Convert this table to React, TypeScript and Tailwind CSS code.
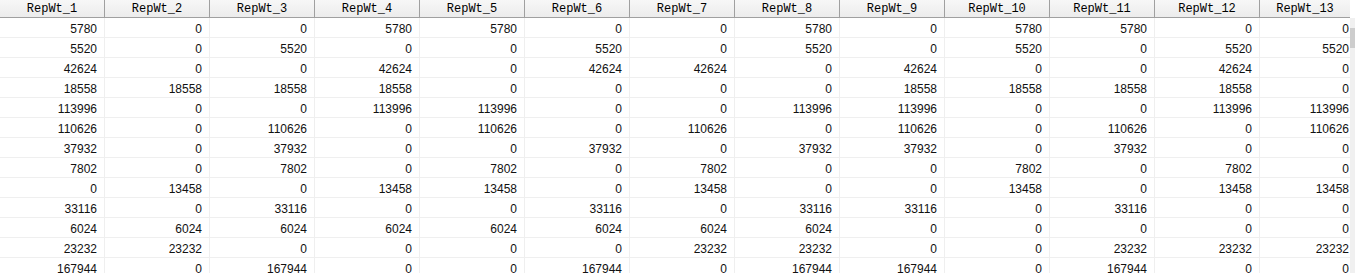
import React from 'react';

const headers = Array.from({ length: 13 }, (_, i) => `RepWt_${i + 1}`);

const rows: number[][] = [
  [5780, 0, 0, 5780, 5780, 0, 0, 5780, 0, 5780, 5780, 0, 0],
  [5520, 0, 5520, 0, 0, 5520, 0, 5520, 0, 5520, 0, 5520, 5520],
  [42624, 0, 0, 42624, 0, 42624, 42624, 0, 42624, 0, 0, 42624, 0],
  [18558, 18558, 18558, 18558, 0, 0, 0, 0, 18558, 18558, 18558, 18558, 0],
  [113996, 0, 0, 113996, 113996, 0, 0, 113996, 113996, 0, 0, 113996, 113996],
  [110626, 0, 110626, 0, 110626, 0, 110626, 0, 110626, 0, 110626, 0, 110626],
  [37932, 0, 37932, 0, 0, 37932, 0, 37932, 37932, 0, 37932, 0, 0],
  [7802, 0, 7802, 0, 7802, 0, 7802, 0, 0, 7802, 0, 7802, 0],
  [0, 13458, 0, 13458, 13458, 0, 13458, 0, 0, 13458, 0, 13458, 13458],
  [33116, 0, 33116, 0, 0, 33116, 0, 33116, 33116, 0, 33116, 0, 0],
  [6024, 6024, 6024, 6024, 6024, 6024, 6024, 6024, 0, 0, 0, 0, 0],
  [23232, 23232, 0, 0, 0, 0, 23232, 23232, 0, 0, 23232, 23232, 23232],
  [167944, 0, 167944, 0, 0, 167944, 0, 167944, 167944, 0, 167944, 0, 0],
];

export default function App() {
  return (
    <div className="flex h-[273px] w-[1355px] overflow-hidden bg-white">
      <div className="w-[1350px] overflow-hidden">
        <div className="grid grid-cols-[repeat(12,105px)_90px]">
          {headers.map((h, i) => (
            <div
              key={h}
              className={`flex h-[18px] items-center justify-center border-b border-[#a0a0a0] bg-gradient-to-b from-[#f7f7f7] to-[#ececec] font-['Liberation_Mono',monospace] text-[12px] text-black ${
                i < 12 ? 'border-r' : ''
              }`}
            >
              {h}
            </div>
          ))}
          {rows.map((row, r) =>
            row.map((v, c) => (
              <div
                key={`${r}-${c}`}
                className={`flex h-[20px] items-center justify-end border-b border-[#efefef] pt-[2px] font-['Liberation_Sans',Arial,sans-serif] text-[12px] text-[#111] ${
                  c < 12 ? 'border-r pr-[7px]' : 'pr-[1px]'
                }`}
              >
                {v}
              </div>
            ))
          )}
        </div>
      </div>
      <div className="flex w-[5px] flex-col">
        <div className="h-[18px] bg-white" />
        <div className="h-[10px] bg-[#f0f0f0]" />
        <div className="h-[20px] bg-[#cdcdcd]" />
        <div className="flex-1 bg-[#f0f0f0]" />
      </div>
    </div>
  );
}
